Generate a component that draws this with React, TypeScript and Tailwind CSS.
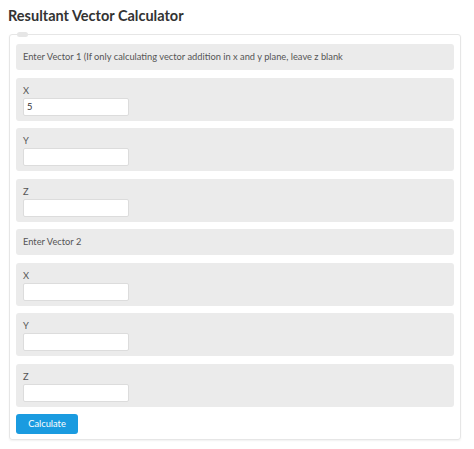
import { useState } from "react";

type Field = { key: string; label: string };

const vec1: Field[] = [
  { key: "x1", label: "X" },
  { key: "y1", label: "Y" },
  { key: "z1", label: "Z" },
];
const vec2: Field[] = [
  { key: "x2", label: "X" },
  { key: "y2", label: "Y" },
  { key: "z2", label: "Z" },
];

function Note({ children }: { children: React.ReactNode }) {
  return (
    <div className="flex h-[26px] items-center rounded-[3px] bg-[#ebebeb] px-[7px] text-[9.3px] text-[#555]">
      {children}
    </div>
  );
}

function InputRow({ label, value, onChange }: { label: string; value: string; onChange: (v: string) => void }) {
  return (
    <div className="h-[43px] rounded-[3px] bg-[#ebebeb] px-[7px] pt-[6px]">
      <label className="block h-[14px] text-[9.3px] leading-[14px] text-[#555]">{label}</label>
      <input
        value={value}
        onChange={(e) => onChange(e.target.value)}
        className="block h-[18px] w-[106px] rounded-[2px] border border-[#dcdcdc] bg-white px-[3px] text-[9.3px] text-[#333] outline-none"
      />
    </div>
  );
}

export default function App() {
  const [vals, setVals] = useState<Record<string, string>>({ x1: "5" });
  const set = (k: string) => (v: string) => setVals((s) => ({ ...s, [k]: v }));

  return (
    <div className="min-h-[449px] bg-white px-[9px] pt-[6px] font-['Lato','Open_Sans',sans-serif]">
      <h1 className="ml-[-1px] text-[14.5px] font-bold leading-[20px] text-[#333]">Resultant Vector Calculator</h1>
      <div className="relative mt-[8px] w-[452px] rounded-[3px] border border-[#e6e6e6] px-[6px] pb-[5px] pt-[9px] shadow-[0_1px_2px_rgba(0,0,0,0.06)]">
        <div className="absolute left-[7px] top-[-3px] h-[5px] w-[11px] rounded-full bg-[#e6e6e6]" />
        <div className="flex flex-col gap-[7.5px]">
          <Note>Enter Vector 1 (If only calculating vector addition in x and y plane, leave z blank</Note>
          {vec1.map((f) => (
            <InputRow key={f.key} label={f.label} value={vals[f.key] ?? ""} onChange={set(f.key)} />
          ))}
          <Note>Enter Vector 2</Note>
          {vec2.map((f) => (
            <InputRow key={f.key} label={f.label} value={vals[f.key] ?? ""} onChange={set(f.key)} />
          ))}
          <div className="flex">
            <button className="flex h-[20px] w-[62px] items-center justify-center rounded-[3px] bg-[#1a9be0] text-[9.3px] text-white">
              Calculate
            </button>
          </div>
        </div>
      </div>
    </div>
  );
}
